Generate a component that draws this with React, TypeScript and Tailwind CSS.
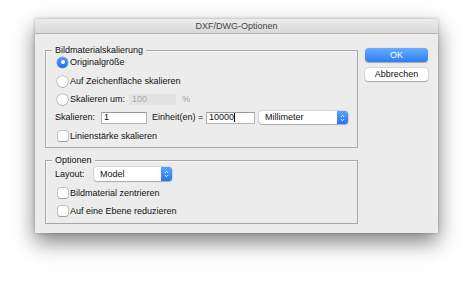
import React from "react";

const font = { fontFamily: '"Liberation Sans", Arial, sans-serif' };

export default function App() {
  return (
    <div
      className="w-[474px] h-[285px] bg-white pl-[35px] pt-[19px] text-[9px] leading-[11px] text-[#111]"
      style={font}
    >
      <div className="w-[403px] bg-[#ececec] shadow-[0_9px_20px_rgba(0,0,0,0.5),0_0_3px_rgba(0,0,0,0.25)]">
        {/* ── Title bar ── */}
        <div className="h-[15px] flex items-center justify-center bg-gradient-to-b from-[#ececec] to-[#d8d8d8] border-b border-[#b4b4b4] text-[#444]">
          DXF/DWG-Optionen
        </div>

        {/* ── Body ── */}
        <div className="flex items-start pl-[10px] pr-[10px] pb-[9px]">
          <div className="w-[313px] mt-[16px]">
            <Group title="Bildmaterialskalierung">
              <div className="flex flex-col pb-[5px]">
                <div className="h-[12px] flex items-center ml-[2px]">
                  <Radio checked />
                  <span className="ml-[2px]">Originalgröße</span>
                </div>
                <div className="h-[12px] mt-[7px] flex items-center ml-[2px]">
                  <Radio />
                  <span className="ml-[2px]">Auf Zeichenfläche skalieren</span>
                </div>
                <div className="h-[12px] mt-[6px] flex items-center ml-[2px]">
                  <Radio />
                  <span className="ml-[2px] w-[59px]">Skalieren um:</span>
                  <div className="w-[47px] h-[11px] bg-[#e2e2e2] pl-[3px] flex items-center text-[#a9a9a9]">
                    100
                  </div>
                  <span className="ml-[6px] text-[#9c9c9c]">%</span>
                </div>
                <div className="h-[13px] mt-[6px] flex items-center">
                  <span className="w-[46px]">Skalieren:</span>
                  <TextInput value="1" width="w-[46px]" />
                  <span className="ml-[5px] w-[54px]">Einheit(en) =</span>
                  <TextInput value="10000" width="w-[49px]" caret />
                  <div className="ml-[4px]">
                    <Select value="Millimeter" width="w-[89px]" />
                  </div>
                </div>
                <div className="h-[12px] mt-[6px] flex items-center ml-[3px]">
                  <Checkbox />
                  <span className="ml-[2px]">Linienstärke skalieren</span>
                </div>
              </div>
            </Group>

            <div className="mt-[12px]">
              <Group title="Optionen">
                <div className="flex flex-col pb-[6px]">
                  <div className="h-[14px] mt-[1px] flex items-center">
                    <span className="w-[39px]">Layout:</span>
                    <Select value="Model" width="w-[78px]" tall />
                  </div>
                  <div className="h-[12px] mt-[6px] flex items-center ml-[3px]">
                    <Checkbox />
                    <span className="ml-[2px]">Bildmaterial zentrieren</span>
                  </div>
                  <div className="h-[12px] mt-[6px] flex items-center ml-[3px]">
                    <Checkbox />
                    <span className="ml-[2px]">Auf eine Ebene reduzieren</span>
                  </div>
                </div>
              </Group>
            </div>
          </div>

          {/* ── Buttons ── */}
          <div className="ml-[7px] w-[63px] mt-[14px] flex flex-col">
            <button className="h-[14px] rounded-[4px] bg-gradient-to-b from-[#6aacfd] to-[#2a7ef6] text-white shadow-[0_0.5px_1px_rgba(0,0,0,0.3)] leading-[14px]">
              OK
            </button>
            <button className="mt-[6px] h-[13px] rounded-[3px] bg-white text-[#111] shadow-[0_0_0_0.5px_rgba(0,0,0,0.18),0_1px_1px_rgba(0,0,0,0.2)] leading-[13px]">
              Abbrechen
            </button>
          </div>
        </div>
      </div>
    </div>
  );
}

// ── Group box ────────────────────────────────────────────────────────────────

function Group({ title, children }: { title: string; children: React.ReactNode }) {
  return (
    <div className="border border-[#a9a9a9] shadow-[inset_1px_1px_0_#f7f7f7] pl-[9px]">
      <span className="block w-fit -mt-[6px] h-[11px] bg-[#ececec] px-[3px] -ml-[3px]">
        {title}
      </span>
      {children}
    </div>
  );
}

// ── Controls ─────────────────────────────────────────────────────────────────

function Radio({ checked }: { checked?: boolean }) {
  if (checked) {
    return (
      <span className="w-[11px] h-[11px] rounded-full bg-gradient-to-b from-[#4d9bfa] to-[#1c6ef2] flex items-center justify-center shadow-[0_0_0_0.5px_rgba(0,60,180,0.4)]">
        <span className="w-[4px] h-[4px] rounded-full bg-white" />
      </span>
    );
  }
  return (
    <span className="w-[11px] h-[11px] rounded-full bg-white shadow-[0_0_0_0.5px_rgba(0,0,0,0.3),0_0.5px_1px_rgba(0,0,0,0.25)]" />
  );
}

function Checkbox() {
  return (
    <span className="w-[10px] h-[10px] rounded-[2px] bg-white shadow-[0_0_0_0.5px_rgba(0,0,0,0.3),0_0.5px_1px_rgba(0,0,0,0.2)]" />
  );
}

function TextInput({
  value,
  width,
  caret,
}: {
  value: string;
  width: string;
  caret?: boolean;
}) {
  return (
    <div
      className={`${width} h-[12px] bg-white border border-[#b3b3b3] border-t-[#9a9a9a] pl-[2px] flex items-center text-[#111]`}
    >
      {value}
      {caret && <span className="w-px h-[9px] bg-black" />}
    </div>
  );
}

function Select({
  value,
  width,
  tall,
}: {
  value: string;
  width: string;
  tall?: boolean;
}) {
  return (
    <div
      className={`${width} ${tall ? "h-[14px]" : "h-[13px]"} flex items-center bg-white rounded-[3px] shadow-[0_0_0_0.5px_rgba(0,0,0,0.18),0_1px_1px_rgba(0,0,0,0.2)]`}
    >
      <span className="flex-1 pl-[6px] text-[#111]">{value}</span>
      <span className="w-[11px] h-full rounded-r-[3px] bg-gradient-to-b from-[#5ea4fb] to-[#2272f3] flex items-center justify-center">
        <svg width="5" height="8" viewBox="0 0 5 8" fill="none">
          <path d="M0.8 3 L2.5 1.3 L4.2 3" stroke="white" strokeWidth="0.9" />
          <path d="M0.8 5 L2.5 6.7 L4.2 5" stroke="white" strokeWidth="0.9" />
        </svg>
      </span>
    </div>
  );
}
